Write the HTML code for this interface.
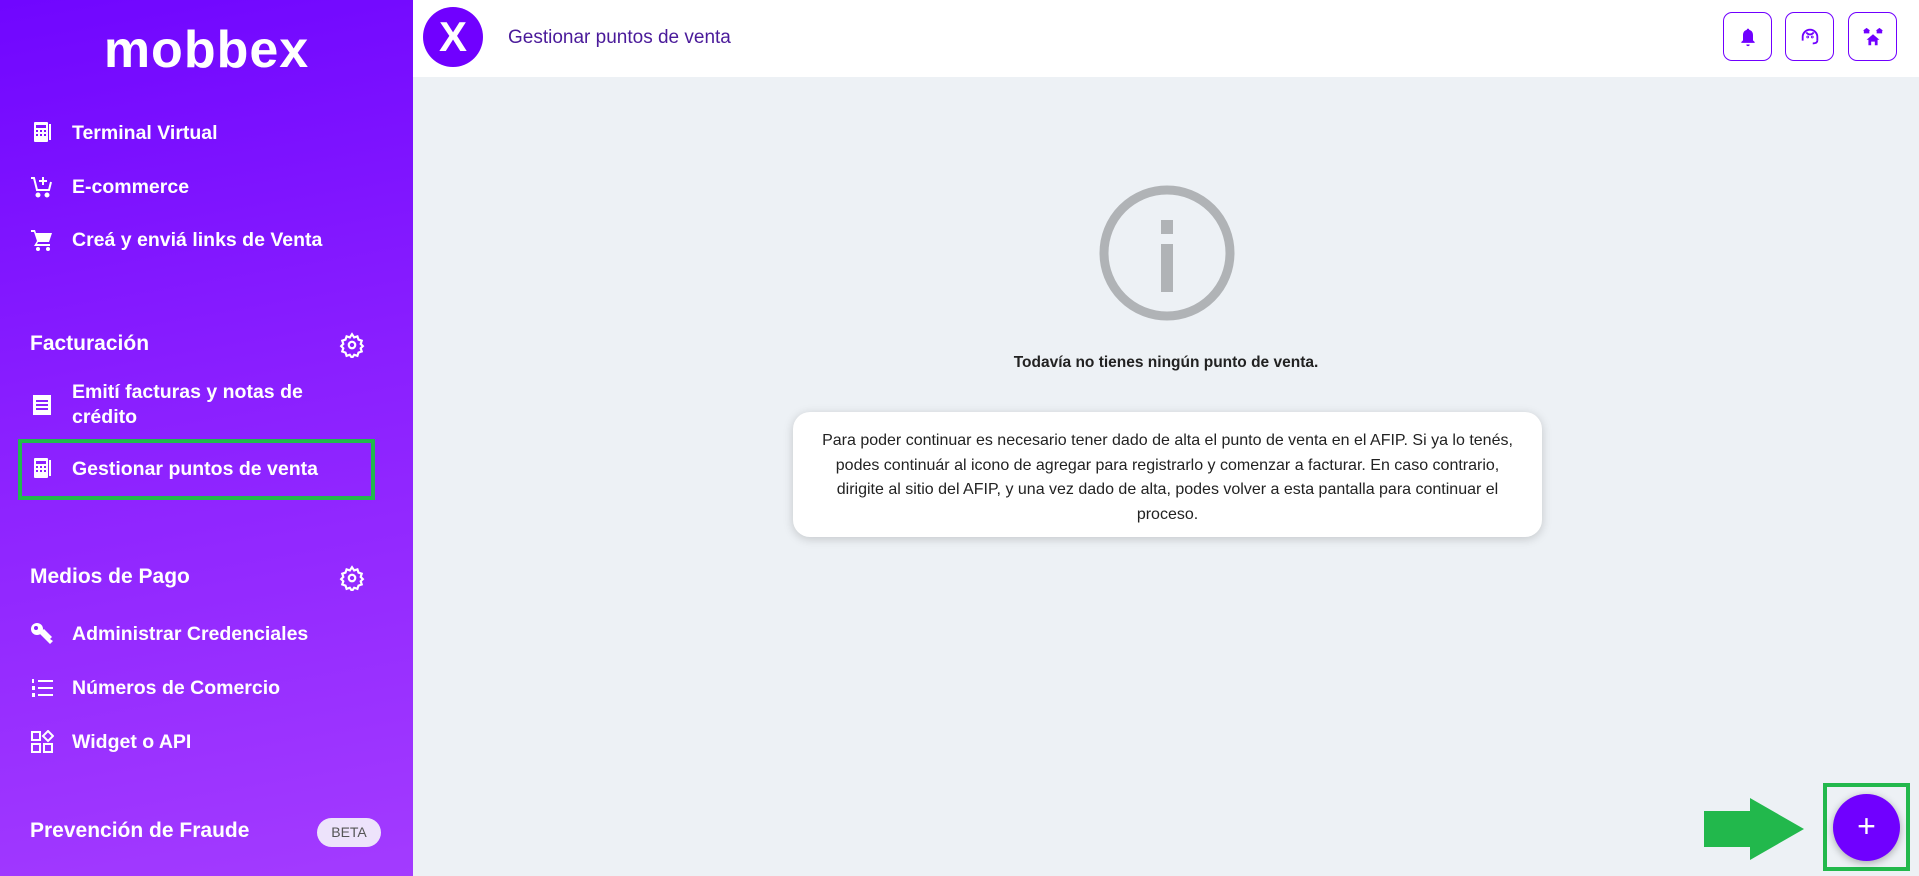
<!DOCTYPE html>
<html><head><meta charset="utf-8"><style>
*{margin:0;padding:0;box-sizing:border-box}
body{width:1919px;height:876px;overflow:hidden;background:#edf1f5;font-family:"Liberation Sans",sans-serif;position:relative}
.sb{position:absolute;left:0;top:0;width:413px;height:876px;background:linear-gradient(170deg,#7006ff 0%,#8a1fff 45%,#a33bff 100%);color:#fff}
.logo{position:absolute;left:0;width:413px;top:20px;text-align:center;font-size:52px;font-weight:bold;letter-spacing:1px;font-family:"Liberation Sans",sans-serif}
.it{position:absolute;left:72px;font-size:19.5px;font-weight:bold;line-height:25px}
.ic{position:absolute;left:30px;width:24px;height:24px}
.hd{position:absolute;left:30px;font-size:21px;font-weight:bold}
.top{position:absolute;left:413px;top:0;right:0;height:77px;background:#fff}
.btn{position:absolute;top:12px;width:49px;height:49px;border:1.5px solid #7000ff;border-radius:9px;display:flex;align-items:center;justify-content:center}
</style></head><body>
<div class="sb">
<div class="logo">mobbex</div>
<svg class="ic" style="top:121px" viewBox="0 0 24 24"><rect x="4" y="1" width="14" height="20" rx="1" fill="#fff"/><g fill="#8010ff"><rect x="6" y="4" width="10" height="3"/><rect x="6" y="9" width="2" height="2"/><rect x="10" y="9" width="2" height="2"/><rect x="14" y="9" width="2" height="2"/><rect x="6" y="13" width="2" height="2"/><rect x="10" y="13" width="2" height="2"/><rect x="14" y="13" width="2" height="2"/></g><rect x="19" y="3" width="2" height="16" fill="#fff"/></svg>
<div class="it" style="top:121px">Terminal Virtual</div>
<svg class="ic" style="top:175px" viewBox="0 0 24 24" fill="none" stroke="#fff" stroke-width="2"><path d="M1 3h3l3 12h12l2-8"/><path d="M13 2v8M9 6h8"/><circle cx="8" cy="20" r="1.5" fill="#fff"/><circle cx="17" cy="20" r="1.5" fill="#fff"/></svg>
<div class="it" style="top:175px">E-commerce</div>
<svg class="ic" style="top:228px" viewBox="0 0 24 24" fill="#fff"><path d="M1 2h4l1 3h16l-3 9H8l-1 2h13v2H4l3-5L4 4H1z"/><circle cx="8" cy="21" r="2"/><circle cx="18" cy="21" r="2"/></svg>
<div class="it" style="top:228px">Creá y enviá links de Venta</div>
<div class="hd" style="top:332px">Facturación</div>
<svg style="position:absolute;left:339px;top:332px;width:26px;height:26px" viewBox="0 0 24 24" fill="none" stroke="#fff" stroke-width="2"><circle cx="12" cy="12" r="3"/><path d="M12 2l2 3 3-1 1 3 3 1-1 3 2 2-2 2 1 3-3 1-1 3-3-1-2 3-2-3-3 1-1-3-3-1 1-3-2-2 2-2-1-3 3-1 1-3 3 1z"/></svg>
<svg class="ic" style="top:393px" viewBox="0 0 24 24" fill="#fff"><path d="M3 2h18v20H3z"/><g fill="#8a1fff"><rect x="6" y="7" width="12" height="2"/><rect x="6" y="11" width="12" height="2"/><rect x="6" y="15" width="12" height="2"/></g></svg>
<div class="it" style="top:380px">Emití facturas y notas de<br>crédito</div>
<div style="position:absolute;left:18px;top:439px;width:357px;height:61px;border:4px solid #22b84c"></div>
<svg class="ic" style="top:457px" viewBox="0 0 24 24"><rect x="4" y="1" width="14" height="20" rx="1" fill="#fff"/><g fill="#8a1fff"><rect x="6" y="4" width="10" height="3"/><rect x="6" y="9" width="2" height="2"/><rect x="10" y="9" width="2" height="2"/><rect x="14" y="9" width="2" height="2"/><rect x="6" y="13" width="2" height="2"/><rect x="10" y="13" width="2" height="2"/><rect x="14" y="13" width="2" height="2"/></g><rect x="19" y="3" width="2" height="16" fill="#fff"/></svg>
<div class="it" style="top:457px">Gestionar puntos de venta</div>
<div class="hd" style="top:565px">Medios de Pago</div>
<svg style="position:absolute;left:339px;top:565px;width:26px;height:26px" viewBox="0 0 24 24" fill="none" stroke="#fff" stroke-width="2"><circle cx="12" cy="12" r="3"/><path d="M12 2l2 3 3-1 1 3 3 1-1 3 2 2-2 2 1 3-3 1-1 3-3-1-2 3-2-3-3 1-1-3-3-1 1-3-2-2 2-2-1-3 3-1 1-3 3 1z"/></svg>
<svg class="ic" style="top:622px" viewBox="0 0 24 24" fill="#fff"><circle cx="7" cy="7" r="6"/><path d="M9 11l11 11 3-3-3-2 2-2-2-2-6-6z"/><circle cx="6" cy="6" r="2" fill="#8a1fff"/></svg>
<div class="it" style="top:622px">Administrar Credenciales</div>
<svg class="ic" style="top:676px" viewBox="0 0 24 24" fill="#fff"><rect x="8" y="4" width="15" height="2"/><rect x="8" y="11" width="15" height="2"/><rect x="8" y="18" width="15" height="2"/><rect x="2" y="3" width="2" height="4"/><rect x="2" y="10" width="3" height="4"/><rect x="2" y="17" width="3" height="4"/></svg>
<div class="it" style="top:676px">Números de Comercio</div>
<svg class="ic" style="top:730px" viewBox="0 0 24 24" fill="none" stroke="#fff" stroke-width="2"><rect x="2" y="2" width="8" height="8"/><rect x="2" y="14" width="8" height="8"/><rect x="14" y="14" width="8" height="8"/><path d="M18 1l5 5-5 5-5-5z"/></svg>
<div class="it" style="top:730px">Widget o API</div>
<div class="hd" style="top:819px">Prevención de Fraude</div>
<div style="position:absolute;left:317px;top:818px;width:64px;height:29px;border-radius:15px;background:#ede3fb;color:#555;font-size:14px;text-align:center;line-height:29px">BETA</div>
</div>
<div class="top">
<div style="position:absolute;left:10px;top:7px;width:60px;height:60px;border-radius:50%;background:#7000ff;color:#fff;font-size:42px;font-weight:bold;text-align:center;line-height:60px">X</div>
<div style="position:absolute;left:95px;top:27px;font-size:19px;color:#4a1a9a">Gestionar puntos de venta</div>
<div class="btn" style="left:1310px"><svg width="20" height="20" viewBox="0 0 24 24" fill="#7000ff"><path d="M12 2c1 0 1.5.7 1.5 1.5C17 4.5 18 7 18 10v6l2 2v1H4v-1l2-2v-6c0-3 1-5.5 4.5-6.5C10.5 2.7 11 2 12 2z"/><path d="M10 21h4a2 2 0 0 1-4 0z"/></svg></div>
<div class="btn" style="left:1372px"><svg width="22" height="22" viewBox="0 0 24 24" fill="none" stroke="#7000ff" stroke-width="2"><path d="M4 16v-4a8 8 0 0 1 16 0v4"/><path d="M8 7c2 3 6 3 8 0"/><path d="M20 16c0 2-2 3-5 3"/><circle cx="9.5" cy="12" r=".5"/><circle cx="14.5" cy="12" r=".5"/></svg></div>
<div class="btn" style="left:1435px"><svg width="22" height="22" viewBox="0 0 24 24" fill="#7000ff"><path d="M12 9l7 6h-2v6h-3v-4h-4v4H7v-6H5z"/><path d="M5 2l4 3H8v3H2V5H1z"/><path d="M19 2l4 3h-1v3h-6V5h-1z"/></svg></div>
</div>
<svg style="position:absolute;left:1096px;top:182px" width="142" height="142" viewBox="0 0 142 142"><circle cx="71" cy="71" r="63" fill="none" stroke="#b0b3b6" stroke-width="9"/><rect x="65" y="38" width="12" height="14" fill="#b0b3b6"/><rect x="65" y="62" width="12" height="48" fill="#b0b3b6"/></svg>
<div style="position:absolute;left:413px;right:0;top:354px;text-align:center;font-size:15.5px;font-weight:bold;color:#222">Todavía no tienes ningún punto de venta.</div>
<div style="position:absolute;left:793px;top:412px;width:749px;height:125px;background:#fff;border-radius:17px;box-shadow:0 2px 10px rgba(0,0,0,.18);text-align:center;font-size:16px;line-height:24.5px;color:#222;padding:17px 22px 0">Para poder continuar es necesario tener dado de alta el punto de venta en el AFIP. Si ya lo tenés, podes continuár al icono de agregar para registrarlo y comenzar a facturar. En caso contrario, dirigite al sitio del AFIP, y una vez dado de alta, podes volver a esta pantalla para continuar el proceso.</div>
<svg style="position:absolute;left:1702px;top:796px" width="104" height="66" viewBox="0 0 104 66"><path d="M2 15h46V2l54 31-54 31V51H2z" fill="#22b84c"/></svg>
<div style="position:absolute;left:1823px;top:783px;width:87px;height:88px;border:4px solid #22b84c"></div>
<div style="position:absolute;left:1833px;top:794px;width:67px;height:67px;border-radius:50%;background:#7000ff;box-shadow:0 2px 8px rgba(0,0,0,.3);color:#fff;font-size:32px;text-align:center;line-height:64px">+</div>
</body></html>
